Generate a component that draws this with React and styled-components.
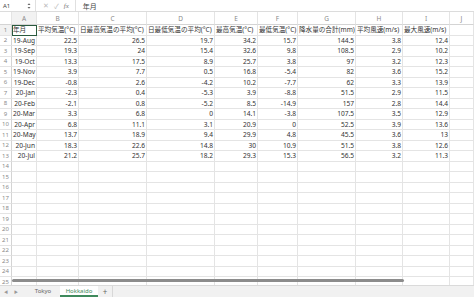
import styled, { createGlobalStyle } from 'styled-components'

const GlobalStyle = createGlobalStyle`
  html, body {
    margin: 0;
    padding: 0;
    overflow: hidden;
    background: #fff;
  }
  body {
    font-family: "Noto Sans", "Noto Sans CJK JP", sans-serif;
    color: #333;
  }
`

const COLS = ['A', 'B', 'C', 'D', 'E', 'F', 'G', 'H', 'I', 'J']
const WIDTHS = '12px 25px 42px 68px 68px 43px 40px 58px 47px 47px 1fr'

const HEAD = [
  '年月',
  '平均気温(°C)',
  '日最高気温の平均(°C)',
  '日最低気温の平均(°C)',
  '最高気温(°C)',
  '最低気温(°C)',
  '降水量の合計(mm)',
  '平均風速(m/s)',
  '最大風速(m/s)',
]

const DATA = [
  ['19-Aug', 22.5, 26.5, 19.7, 34.2, 15.7, 144.5, 3.8, 12.4],
  ['19-Sep', 19.3, 24, 15.4, 32.6, 9.8, 108.5, 2.9, 10.2],
  ['19-Oct', 13.3, 17.5, 8.9, 25.7, 3.8, 97, 3.2, 12.3],
  ['19-Nov', 3.9, 7.7, 0.5, 16.8, -5.4, 82, 3.6, 15.2],
  ['19-Dec', -0.8, 2.6, -4.2, 10.2, -7.7, 62, 3.3, 13.9],
  ['20-Jan', -2.3, 0.4, -5.3, 3.9, -8.8, 51.5, 2.9, 11.5],
  ['20-Feb', -2.1, 0.8, -5.2, 8.5, -14.9, 157, 2.8, 14.4],
  ['20-Mar', 3.3, 6.8, 0, 14.1, -3.8, 107.5, 3.5, 12.9],
  ['20-Apr', 6.8, 11.1, 3.1, 20.9, 0, 52.5, 3.9, 13.6],
  ['20-May', 13.7, 18.9, 9.4, 29.9, 4.8, 45.5, 3.6, 13],
  ['20-Jun', 18.3, 22.6, 14.8, 30, 10.9, 51.5, 3.8, 12.6],
  ['20-Jul', 21.2, 25.7, 18.2, 29.3, 15.3, 56.5, 3.2, 11.3],
]

const TOTAL_ROWS = 25

const Page = styled.div`
  display: flex;
  flex-direction: column;
  width: 474px;
  height: 297px;
  font-size: 7px;
`

const FormulaBar = styled.div`
  display: flex;
  align-items: center;
  height: 11px;
  border-bottom: 1px solid #dcdcdc;
  color: #444;
  flex-shrink: 0;
`

const NameBox = styled.div`
  display: flex;
  align-items: center;
  justify-content: space-between;
  width: 36px;
  padding: 0 4px 0 3px;
  font-size: 6px;
  box-sizing: border-box;
  border-right: 1px solid #e0e0e0;
  height: 100%;
`

const FormulaIcons = styled.div`
  display: flex;
  align-items: center;
  gap: 5px;
  padding: 0 6px 0 7px;
  color: #bbb;
  font-size: 7px;
  height: 100%;
  border-right: 1px solid #e0e0e0;
`

const Fx = styled.span`
  font-family: "Liberation Serif", serif;
  font-style: italic;
  color: #777;
`

const FormulaText = styled.div`
  padding-left: 7px;
  font-size: 7px;
`

const Sheet = styled.div`
  position: relative;
  flex: 1;
  overflow: hidden;
`

const Grid = styled.div`
  display: grid;
  grid-template-columns: ${WIDTHS};
  grid-template-rows: 13px;
  grid-auto-rows: 10.5px;
`

const Cell = styled.div`
  box-sizing: border-box;
  border-right: 1px solid #e4e4e4;
  border-bottom: 1px solid #e4e4e4;
  padding: 0 1px;
  white-space: nowrap;
  overflow: hidden;
  line-height: 9.5px;
  font-size: 6.6px;
  color: #333;
  text-align: ${(p) => (p.$num ? 'right' : 'left')};
  ${(p) => p.$selected && 'outline: 1.5px solid #2a5a3e; outline-offset: -1.5px;'}
`

const ColHead = styled.div`
  box-sizing: border-box;
  border-right: 1px solid #e4e4e4;
  border-bottom: 1px solid #d4d4d4;
  display: flex;
  align-items: center;
  justify-content: center;
  color: #8a8a8a;
  font-size: 6.5px;
  background: ${(p) => (p.$active ? '#f2f2f2' : '#fff')};
`

const RowHead = styled.div`
  box-sizing: border-box;
  border-right: 1px solid #d4d4d4;
  border-bottom: 1px solid #e4e4e4;
  display: flex;
  align-items: center;
  justify-content: center;
  color: #8a8a8a;
  font-size: 6px;
  background: ${(p) => (p.$active ? '#f2f2f2' : '#fff')};
`

const ScrollThumb = styled.div`
  position: absolute;
  left: 12px;
  width: 392px;
  bottom: 3px;
  height: 3px;
  border-radius: 2px;
  background: #8c8c8c;
`

const TabBar = styled.div`
  display: flex;
  align-items: stretch;
  height: 11px;
  background: #f1f1f1;
  border-top: 1px solid #dadada;
  flex-shrink: 0;
  font-size: 6px;
  color: #666;
`

const Arrows = styled.div`
  display: flex;
  align-items: center;
  gap: 6px;
  padding: 0 8px 0 4px;
  font-size: 4px;
  color: #999;
`

const Tab = styled.div`
  display: flex;
  align-items: center;
  justify-content: center;
  width: ${(p) => p.$w}px;
  box-sizing: border-box;
  background: ${(p) => (p.$active ? '#fff' : 'transparent')};
  color: ${(p) => (p.$active ? '#3e8a5c' : '#666')};
  border-bottom: 2px solid ${(p) => (p.$active ? '#3e8a5c' : 'transparent')};
`

const AddTab = styled.div`
  display: flex;
  align-items: center;
  justify-content: center;
  width: 14px;
  font-size: 8px;
  color: #666;
  border-right: 1px solid #d8d8d8;
`

const Stepper = () => (
  <svg width="4" height="8" viewBox="0 0 4 8">
    <path d="M0.5 3 L2 1.2 L3.5 3 Z M0.5 5 L2 6.8 L3.5 5 Z" fill="#666" />
  </svg>
)

export default function App() {
  const rows = []
  for (let r = 1; r <= TOTAL_ROWS; r++) {
    let values = null
    if (r === 1) values = HEAD
    else if (r - 2 < DATA.length) values = DATA[r - 2]
    rows.push(
      <RowHead key={`h${r}`} $active={r === 1}>
        {r}
      </RowHead>
    )
    COLS.forEach((c, i) => {
      const v = values ? values[i] : undefined
      const isNum = r > 1 && v !== undefined
      rows.push(
        <Cell key={`${c}${r}`} $num={isNum} $selected={r === 1 && i === 0}>
          {v !== undefined ? String(v) : ''}
        </Cell>
      )
    })
  }

  return (
    <>
      <GlobalStyle />
      <Page>
        <FormulaBar>
          <NameBox>
            <span>A1</span>
            <Stepper />
          </NameBox>
          <FormulaIcons>
            <span>✕</span>
            <span>✓</span>
            <Fx>fx</Fx>
          </FormulaIcons>
          <FormulaText>年月</FormulaText>
        </FormulaBar>
        <Sheet>
          <Grid>
            <ColHead />
            {COLS.map((c, i) => (
              <ColHead key={c} $active={i === 0}>
                {c}
              </ColHead>
            ))}
            {rows}
          </Grid>
          <ScrollThumb />
        </Sheet>
        <TabBar>
          <Arrows>
            <span>◀</span>
            <span>▶</span>
          </Arrows>
          <Tab $w={34}>Tokyo</Tab>
          <Tab $w={38} $active>
            Hokkaido
          </Tab>
          <AddTab>+</AddTab>
        </TabBar>
      </Page>
    </>
  )
}
